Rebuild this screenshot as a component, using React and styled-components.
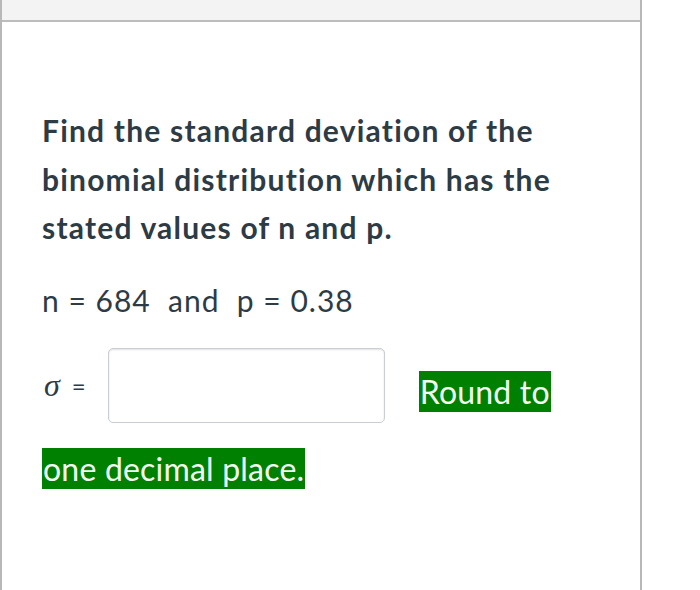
import React from "react";
import styled, { createGlobalStyle } from "styled-components";

const Global = createGlobalStyle`
  html, body { margin: 0; padding: 0; background: #ffffff; }
  body { font-family: Lato, "Noto Sans", sans-serif; color: #2d3b45; }
`;

const Panel = styled.div`
  width: 638px;
  height: 590px;
  border-left: 2px solid #b8b8b8;
  border-right: 2px solid #b8b8b8;
  box-sizing: content-box;
  display: flex;
  flex-direction: column;
  overflow: hidden;
`;

const Header = styled.div`
  height: 20px;
  background: #f3f3f3;
  border-bottom: 2px solid #bcbcbc;
  flex: none;
`;

const Body = styled.div`
  padding: 84px 0 0 40px;
  display: flex;
  flex-direction: column;
`;

const Question = styled.p`
  margin: 0;
  font-size: 30px;
  font-weight: 700;
  letter-spacing: 1.2px;
  line-height: 48.5px;
  width: 515px;
`;

const Values = styled.p`
  margin: 30px 0 0;
  font-size: 30px;
  letter-spacing: 1px;
  line-height: 36px;
`;

const AnswerRow = styled.div`
  display: flex;
  align-items: center;
  margin-top: 30px;
`;

const Sigma = styled.span`
  font-family: "Liberation Serif", "DejaVu Serif", serif;
  font-style: italic;
  font-size: 32px;
  margin-left: 2px;
`;

const Equals = styled.span`
  font-size: 24px;
  margin-left: 12px;
`;

const Input = styled.div`
  width: 277px;
  height: 75px;
  margin-left: 22px;
  border: 1px solid #c9ced2;
  border-radius: 5px;
  box-shadow: inset 0 1px 2px rgba(0, 0, 0, 0.12);
  box-sizing: border-box;
`;

const Highlight = styled.span`
  background: #008000;
  color: #f4fff4;
  font-size: 32px;
  letter-spacing: 0.2px;
  line-height: 41px;
  display: inline-block;
  padding: 0 1px;
`;

const RoundTo = styled(Highlight)`
  margin-left: 34px;
  margin-top: 12px;
`;

const Note = styled.div`
  margin-top: 25px;
`;

export default function App() {
  return (
    <>
      <Global />
      <Panel>
        <Header />
        <Body>
          <Question>
            Find the standard deviation of the binomial distribution which has the stated values of n and p.
          </Question>
          <Values>n = 684&nbsp; and&nbsp; p = 0.38</Values>
          <AnswerRow>
            <Sigma>σ</Sigma>
            <Equals>=</Equals>
            <Input />
            <RoundTo>Round to</RoundTo>
          </AnswerRow>
          <Note>
            <Highlight>one decimal place.</Highlight>
          </Note>
        </Body>
      </Panel>
    </>
  );
}
